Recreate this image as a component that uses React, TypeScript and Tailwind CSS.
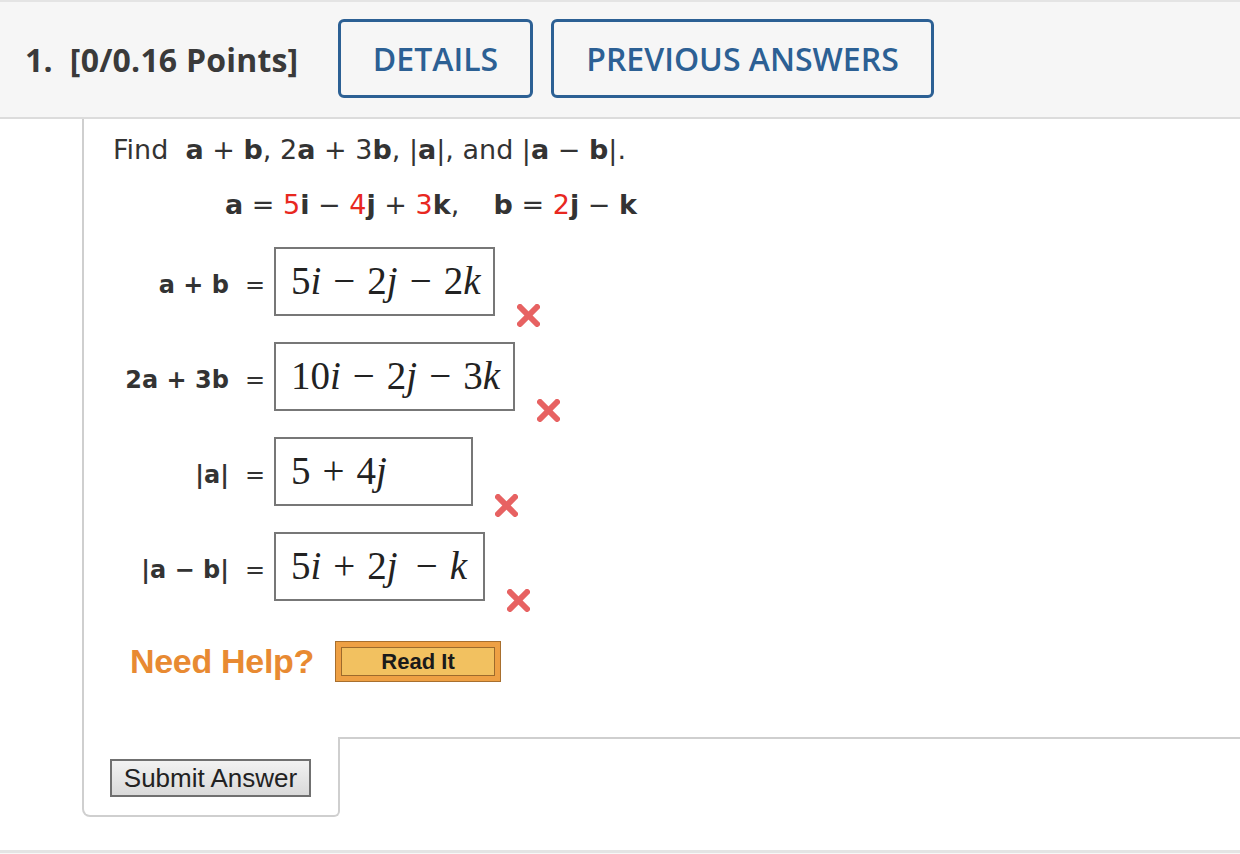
import React from 'react';

const sans = { fontFamily: '"DejaVu Sans", Verdana, sans-serif' };

// red cross mark shown after a wrong answer
const WrongMark: React.FC = () => (
  <svg width="27" height="27" viewBox="0 0 27 27" className="shrink-0">
    <g stroke="#e65a5a" strokeWidth="6" strokeLinecap="round" opacity="0.95">
      <line x1="5" y1="5" x2="22" y2="22" />
      <line x1="22" y1="5" x2="5" y2="22" />
    </g>
  </svg>
);

const B: React.FC<{ children: React.ReactNode }> = ({ children }) => <b className="font-bold">{children}</b>;
const R: React.FC<{ children: React.ReactNode }> = ({ children }) => <span className="text-[#e8281f]">{children}</span>;
const I: React.FC<{ children: React.ReactNode }> = ({ children }) => <i className="italic">{children}</i>;
const Op: React.FC<{ children: React.ReactNode }> = ({ children }) => <span className="mx-[12px]">{children}</span>;

type Row = { label: React.ReactNode; answer: React.ReactNode; boxW: string };

const rows: Row[] = [
  {
    label: <><B>a</B> + <B>b</B></>,
    answer: <>5<I>i</I><Op>−</Op>2<I>j</I><Op>−</Op>2<I>k</I></>,
    boxW: 'w-[221px]',
  },
  {
    label: <><B>2a</B> + <B>3b</B></>,
    answer: <>10<I>i</I><Op>−</Op>2<I>j</I><Op>−</Op>3<I>k</I></>,
    boxW: 'w-[241px]',
  },
  {
    label: <>|<B>a</B>|</>,
    answer: <>5<Op>+</Op>4<I>j</I></>,
    boxW: 'w-[199px]',
  },
  {
    label: <>|<B>a</B> − <B>b</B>|</>,
    answer: <>5<I>i</I><Op>+</Op>2<I>j</I><span className="ml-[6px]" /><Op>−</Op><I>k</I></>,
    boxW: 'w-[211px]',
  },
];

export default function App() {
  return (
    <div className="w-[1240px] h-[854px] bg-white overflow-hidden">
      {/* question header */}
      <div className="h-[119px] border-t-2 border-b-2 border-t-[#e4e4e4] border-b-[#dcdcdc] bg-[#f6f6f6] flex items-center pl-[25px]" style={{ fontFamily: '"Open Sans", sans-serif' }}>
        <div className="text-[32px] font-bold text-[#3a3a3a] w-[313px] tracking-[0.2px]">1.&nbsp; [0/0.16 Points]</div>
        <div className="flex gap-[18px] -mt-[2px]">
          <div className="w-[195px] h-[79px] border-[3px] border-[#2c6094] rounded-md flex items-center justify-center text-[32px] font-semibold text-[#2c6094]">DETAILS</div>
          <div className="w-[383px] h-[79px] border-[3px] border-[#2c6094] rounded-md flex items-center justify-center text-[32px] font-semibold text-[#2c6094]">PREVIOUS ANSWERS</div>
        </div>
      </div>

      {/* question body */}
      <div className="ml-[82px] border-l-2 border-[#cfcfcf] pl-[29px] pt-[15px] h-[618px] text-[#333]" style={sans}>
        <p className="text-[27px] leading-[32px]">
          Find&nbsp; <B>a</B> + <B>b</B>, 2<B>a</B> + 3<B>b</B>, |<B>a</B>|, and |<B>a</B> − <B>b</B>|.
        </p>
        <p className="text-[27px] leading-[32px] mt-[23px] pl-[112px]">
          <B>a</B> = <R>5</R><B>i</B> − <R>4</R><B>j</B> + <R>3</R><B>k</B>,&nbsp;&nbsp;&nbsp; <B>b</B> = <R>2</R><B>j</B> − <B>k</B>
        </p>

        <div className="mt-[26px] flex flex-col gap-[13px]">
          {rows.map((r, i) => (
            <div key={i} className="flex items-start">
              <div className="w-[152px] h-[69px] flex items-center justify-end text-[24px] gap-[16px] pt-[6px]">
                <span className="font-bold">{r.label}</span>
                <span className="font-normal">=</span>
              </div>
              <div className={`ml-[9px] h-[69px] border-2 border-[#777] flex items-center pl-[15px] text-[39px] text-[#222] ${r.boxW}`} style={{ fontFamily: '"Liberation Serif", "Times New Roman", serif' }}>
                {r.answer}
              </div>
              <div className="ml-[20px] mt-[55px]">
                <WrongMark />
              </div>
            </div>
          ))}
        </div>

        <div className="mt-[22px] flex items-center pl-[17px]">
          <span className="text-[34px] font-bold text-[#e88a32] tracking-[-0.3px]" style={{ fontFamily: '"Liberation Sans", Arial, sans-serif' }}>Need Help?</span>
          <div className="ml-[21px] w-[166px] h-[41px] border border-[#a86f2e] bg-[#eea044] p-[5px]">
            <div className="w-full h-full border border-[#9c6a2c] bg-[#f2c160] flex items-center justify-center text-[22px] font-bold text-[#1a1a1a]" style={{ fontFamily: '"Liberation Sans", Arial, sans-serif' }}>Read It</div>
          </div>
        </div>
      </div>

      {/* submit row */}
      <div className="flex h-[80px]">
        <div className="ml-[82px] w-[258px] border-l-2 border-b-2 border-r-2 border-[#cfcfcf] rounded-br-[6px] rounded-bl-[8px] pl-[26px] pt-[22px]">
          <button className="w-[201px] h-[38px] border-2 border-[#707070] bg-gradient-to-b from-[#f2f2f2] to-[#dadada] text-[26px] text-[#222] leading-none" style={{ fontFamily: '"Liberation Sans", Arial, sans-serif' }}>
            Submit Answer
          </button>
        </div>
        <div className="flex-1 border-t-2 border-[#cfcfcf]" />
      </div>

      <div className="mt-[33px] border-t-[3px] border-[#e4e4e4] h-[10px] bg-[#f7f7f7]" />
    </div>
  );
}
